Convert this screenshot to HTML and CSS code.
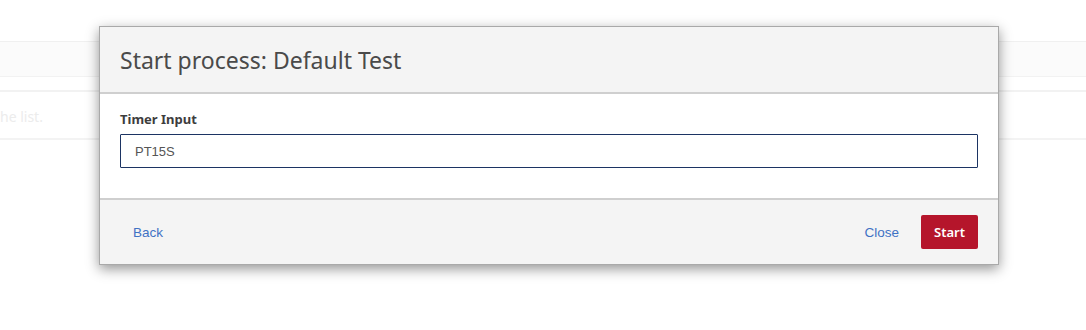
FILE: index.html
```html
<!DOCTYPE html>
<html lang="en">
<head>
<meta charset="utf-8">
<title>Start process</title>
<link rel="stylesheet" href="styles.css">
</head>
<body>
<div class="page">
  <div class="bg-top"></div>
  <div class="bg-band"></div>
  <div class="bg-gap"></div>
  <div class="bg-row"><span class="bg-text">he list.</span></div>
</div>
<div class="modal">
  <div class="modal-header">
    <h2 class="modal-title">Start process: Default Test</h2>
  </div>
  <div class="modal-body">
    <label class="field-label" for="timer">Timer Input</label>
    <input class="field-input" id="timer" type="text" value="PT15S">
  </div>
  <div class="modal-footer">
    <button class="btn-link">Back</button>
    <div class="footer-right">
      <button class="btn-link">Close</button>
      <button class="btn-primary">Start</button>
    </div>
  </div>
</div>
</body>
</html>
```

FILE: styles.css
```css
html, body {
  margin: 0;
  padding: 0;
  background: #ffffff;
  font-family: "Noto Sans", "Open Sans", sans-serif;
}

.page {
  width: 1086px;
  height: 330px;
  display: flex;
  flex-direction: column;
}

.bg-top {
  height: 41px;
  border-bottom: 1px solid #f0f0f0;
}

.bg-band {
  height: 34px;
  background: #fbfbfb;
  border-bottom: 1px solid #f2f2f2;
}

.bg-gap {
  height: 13px;
  border-bottom: 2px solid #f2f2f2;
}

.bg-row {
  height: 46px;
  border-bottom: 2px solid #f3f3f3;
  display: flex;
  align-items: center;
  font-size: 14px;
  color: #ececec;
}

.bg-text {
  margin-left: 0;
  margin-top: 3px;
}

.modal {
  position: absolute;
  left: 99px;
  top: 26px;
  width: 898px;
  background: #ffffff;
  border: 1px solid #a9a9a9;
  box-shadow: 0 4px 12px rgba(0, 0, 0, 0.42);
  display: flex;
  flex-direction: column;
}

.modal-header {
  height: 65px;
  background: #f4f4f4;
  border-bottom: 2px solid #cfcfcf;
  display: flex;
  align-items: center;
  padding: 0 20px;
}

.modal-title {
  margin: 0;
  font-size: 23px;
  font-weight: 400;
  color: #4a4a4a;
}

.modal-body {
  padding: 17px 20px 30px 20px;
  display: flex;
  flex-direction: column;
  border-bottom: 2px solid #cfcfcf;
}

.field-label {
  font-size: 13px;
  font-weight: 700;
  color: #3d3d3d;
  line-height: 16px;
  margin-bottom: 7px;
}

.field-input {
  height: 34px;
  box-sizing: border-box;
  border: 1px solid #1c3463;
  border-radius: 1px;
  padding: 0 14px;
  font-family: "Liberation Sans", Arial, sans-serif;
  font-size: 13px;
  color: #555555;
  width: 858px;
  outline: none;
}

.modal-footer {
  height: 64px;
  background: #f4f4f4;
  display: flex;
  align-items: center;
  justify-content: space-between;
  padding: 0 20px 0 21px;
}

.footer-right {
  display: flex;
  align-items: center;
  gap: 10px;
}

.btn-link {
  background: none;
  border: none;
  padding: 8px 12px;
  font-family: "Liberation Sans", Arial, sans-serif;
  font-size: 13.5px;
  color: #3f72c4;
  cursor: pointer;
}

.btn-primary {
  height: 34px;
  width: 57px;
  background: #b5152b;
  color: #ffffff;
  border: none;
  border-radius: 2px;
  font-family: "Noto Sans", "Open Sans", sans-serif;
  font-size: 13px;
  font-weight: 600;
  cursor: pointer;
}
```
